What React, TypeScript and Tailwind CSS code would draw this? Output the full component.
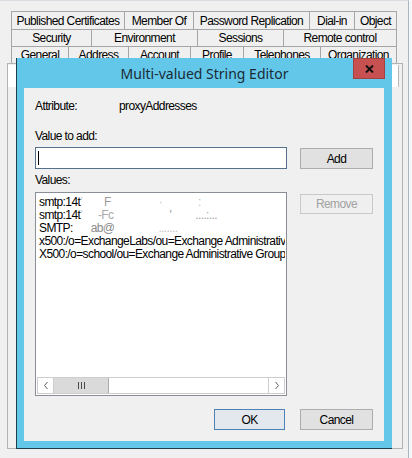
import React from "react";

type Tab = { label: string; w: string };

const tabRows: { h: string; tabs: Tab[] }[] = [
  {
    h: "h-[18px]",
    tabs: [
      { label: "Published Certificates", w: "w-[113px]" },
      { label: "Member Of", w: "w-[69px]" },
      { label: "Password Replication", w: "w-[116px]" },
      { label: "Dial-in", w: "w-[45px]" },
      { label: "Object", w: "w-[43px]" },
    ],
  },
  {
    h: "h-[17px]",
    tabs: [
      { label: "Security", w: "w-[80px]" },
      { label: "Environment", w: "w-[106px]" },
      { label: "Sessions", w: "w-[86px]" },
      { label: "Remote control", w: "w-[114px]" },
    ],
  },
  {
    h: "h-[17px]",
    tabs: [
      { label: "General", w: "w-[57px]" },
      { label: "Address", w: "w-[60px]" },
      { label: "Account", w: "w-[62px]" },
      { label: "Profile", w: "w-[53px]" },
      { label: "Telephones", w: "w-[77px]" },
      { label: "Organization", w: "w-[77px]" },
    ],
  },
];

function WinButton({
  children,
  className = "",
  disabled = false,
  primary = false,
}: {
  children: React.ReactNode;
  className?: string;
  disabled?: boolean;
  primary?: boolean;
}) {
  const look = disabled
    ? "bg-[#efefef] border-[#c9c9c9] text-[#a2a2a2]"
    : primary
    ? "bg-[#e3e8ee] border-[#4c83b4] text-black"
    : "bg-[#e1e1e1] border-[#adadad] text-black";
  return (
    <div
      className={`flex items-center justify-center border text-[12px] leading-none ${look} ${className}`}
    >
      {children}
    </div>
  );
}

function Chevron({ dir }: { dir: "left" | "right" }) {
  return (
    <svg width="6" height="9" viewBox="0 0 6 9">
      <polyline
        points={dir === "left" ? "4.5,1 1.5,4.5 4.5,8" : "1.5,1 4.5,4.5 1.5,8"}
        fill="none"
        stroke="#606060"
        strokeWidth="1"
      />
    </svg>
  );
}

export default function App() {
  return (
    <div className="w-[412px] h-[458px] bg-[#f6f7f9] overflow-hidden font-['Liberation_Sans',Arial,sans-serif] text-black tracking-[-0.6px]">
      <div className="relative w-[409px] h-[458px] bg-[#f0f0f0] border-t border-r border-t-[#d9dde2] border-r-[#a9b6c4]">
        {/* property sheet tabs */}
        <div className="ml-[11px] mt-[10px] flex flex-col">
          {tabRows.map((row, ri) => (
            <div key={ri} className={`flex ${row.h}`}>
              {row.tabs.map((t, ti) => (
                <div
                  key={t.label}
                  className={`${t.w} flex items-center justify-center border-l border-t border-[#a6a6a6] text-[12px] whitespace-nowrap ${
                    ti === row.tabs.length - 1 ? "border-r" : ""
                  }`}
                >
                  {t.label}
                </div>
              ))}
            </div>
          ))}
        </div>

        {/* tab page */}
        <div className="ml-[7px] w-[396px] h-[386px] border border-[#b3b3b3] bg-[#f0f0f0]">
          <div className="mt-[1px] w-[391px] h-[22px] bg-white border-r border-[#b9b9b9]" />
        </div>

        {/* Multi-valued String Editor window */}
        <div className="absolute left-[16px] top-[57px] w-[376px] h-[391px] bg-[#63c7ea] border-l border-b border-[#1d3f4c] flex flex-col">
          <div className="relative h-[30px] flex items-center justify-center">
            <span className="font-['Noto_Sans',sans-serif] text-[14px] tracking-normal text-[#1b2b34]">
              Multi-valued String Editor
            </span>
            <div className="absolute right-[7px] top-0 w-[32px] h-[21px] bg-[#c75050] border border-[#a54040] flex items-center justify-center">
              <svg width="9" height="8" viewBox="0 0 9 8">
                <path d="M1 0.5 L8 7.5 M8 0.5 L1 7.5" stroke="#111" strokeWidth="2" />
              </svg>
            </div>
          </div>

          <div className="ml-[7px] mr-[8px] mb-[7px] flex-1 bg-[#f0f0f0] pl-[11px] pt-[11px] text-[12px]">
            <div className="flex h-[14px] items-center">
              <span className="w-[84px]">Attribute:</span>
              <span>proxyAddresses</span>
            </div>

            <div className="mt-[16px] h-[14px] leading-[14px]">Value to add:</div>

            <div className="mt-[4px] flex gap-[13px]">
              <div className="w-[252px] h-[22px] bg-white border border-[#56718d] flex items-center pl-[2px]">
                <div className="w-px h-[14px] bg-black" />
              </div>
              <WinButton className="mt-[1px] w-[73px] h-[21px]">Add</WinButton>
            </div>

            <div className="mt-[4px] h-[14px] leading-[14px]">Values:</div>

            <div className="mt-[5px] flex gap-[13px]">
              <div className="w-[252px] h-[204px] bg-white border border-[#8a8e96] p-px flex flex-col">
                <div className="flex-1 overflow-hidden whitespace-nowrap pl-[2px] pt-[2px] leading-[13px]">
                  <div>
                    smtp:14t<span className="text-[#c8c8c8]">'</span>
                    <span className="ml-[22px] text-[#9a9a9a]">F</span>
                    <span className="ml-[48px] text-[#c4c4c4]">·</span>
                    <span className="ml-[36px] text-[#bdbdbd]">:</span>
                  </div>
                  <div>
                    smtp:14t<span className="text-[#c8c8c8]">'</span>
                    <span className="ml-[16px] text-[#b0b0b0]">-</span>
                    <span className="text-[#a8a8a8]">Fc</span>
                    <span className="ml-[56px] text-[#9c9c9c]">'</span>
                    <span className="ml-[24px] text-[#a0a0a0]">....:...</span>
                  </div>
                  <div>
                    SMTP:<span className="ml-[18px] text-[#8a8a8a]">ab@</span>
                    <span className="ml-[44px] text-[#c4c4c4]">.......</span>
                  </div>
                  <div>x500:/o=ExchangeLabs/ou=Exchange Administrativ</div>
                  <div>X500:/o=school/ou=Exchange Administrative Group</div>
                </div>
                <div className="h-[17px] border border-[#cdcdcd] flex">
                  <div className="w-[16px] border-r border-[#cdcdcd] flex items-center justify-center">
                    <Chevron dir="left" />
                  </div>
                  <div className="w-[55px] bg-[#dadada] border-r border-[#ababab] flex items-center justify-center gap-[2px]">
                    <div className="w-px h-[7px] bg-[#4a4a4a]" />
                    <div className="w-px h-[7px] bg-[#4a4a4a]" />
                    <div className="w-px h-[7px] bg-[#4a4a4a]" />
                  </div>
                  <div className="flex-1" />
                  <div className="w-[16px] border-l border-[#cdcdcd] flex items-center justify-center">
                    <Chevron dir="right" />
                  </div>
                </div>
              </div>
              <WinButton disabled className="mt-[2px] w-[73px] h-[20px]">
                Remove
              </WinButton>
            </div>

            <div className="mt-[13px] flex gap-[15px] pl-[179px]">
              <WinButton primary className="w-[71px] h-[21px]">
                OK
              </WinButton>
              <WinButton className="w-[73px] h-[21px]">Cancel</WinButton>
            </div>
          </div>
        </div>
      </div>
    </div>
  );
}
